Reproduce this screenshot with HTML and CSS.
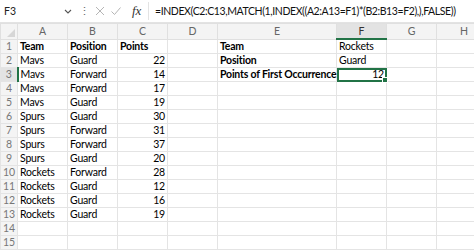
FILE: index.html
```html
<!DOCTYPE html>
<html lang="en">
<head>
  <meta charset="UTF-8" />
  <title>Sheet</title>
  <link rel="stylesheet" href="styles.css">
</head>
<body>
  <div class="formula-bar">
    <div class="name-box">
      <span>F3</span>
      <svg class="chevron" width="8" height="5" viewBox="0 0 8 5"><path d="M1 1 L4 4 L7 1" fill="none" stroke="#555" stroke-width="1.1"/></svg>
    </div>
    <div class="dots">&#8942;</div>
    <svg class="tool cancel" width="12" height="12" viewBox="0 0 12 12"><path d="M2 2 L10 10 M10 2 L2 10" stroke="#b5b5b5" stroke-width="1"/></svg>
    <svg class="tool enter" width="12" height="12" viewBox="0 0 12 12"><path d="M1.5 6.5 L4.5 9.5 L10.5 2.5" fill="none" stroke="#b5b5b5" stroke-width="1"/></svg>
    <span class="fx">fx</span>
    <div class="formula">=INDEX(C2:C13,MATCH(1,INDEX((A2:A13=F1)*(B2:B13=F2),),FALSE))</div>
  </div>

  <table class="sheet">
    <colgroup>
      <col class="c-hdr"><col class="c-std"><col class="c-std"><col class="c-std"><col class="c-std"><col class="c-wide"><col class="c-std"><col class="c-std"><col class="c-last">
    </colgroup>
    <thead>
      <tr><th class="corner"></th><th>A</th><th>B</th><th>C</th><th>D</th><th>E</th><th class="active-col">F</th><th>G</th><th>H</th></tr>
    </thead>
    <tbody>
      <tr><th>1</th><td class="b">Team</td><td class="b">Position</td><td class="b">Points</td><td></td><td class="b">Team</td><td>Rockets</td><td></td><td></td></tr>
      <tr><th>2</th><td>Mavs</td><td>Guard</td><td class="num">22</td><td></td><td class="b">Position</td><td>Guard</td><td></td><td></td></tr>
      <tr><th class="active-row">3</th><td>Mavs</td><td>Forward</td><td class="num">14</td><td></td><td class="b">Points of First Occurrence</td><td class="num selected">12</td><td></td><td></td></tr>
      <tr><th>4</th><td>Mavs</td><td>Forward</td><td class="num">17</td><td></td><td></td><td></td><td></td><td></td></tr>
      <tr><th>5</th><td>Mavs</td><td>Guard</td><td class="num">19</td><td></td><td></td><td></td><td></td><td></td></tr>
      <tr><th>6</th><td>Spurs</td><td>Guard</td><td class="num">30</td><td></td><td></td><td></td><td></td><td></td></tr>
      <tr><th>7</th><td>Spurs</td><td>Forward</td><td class="num">31</td><td></td><td></td><td></td><td></td><td></td></tr>
      <tr><th>8</th><td>Spurs</td><td>Forward</td><td class="num">37</td><td></td><td></td><td></td><td></td><td></td></tr>
      <tr><th>9</th><td>Spurs</td><td>Guard</td><td class="num">20</td><td></td><td></td><td></td><td></td><td></td></tr>
      <tr><th>10</th><td>Rockets</td><td>Forward</td><td class="num">28</td><td></td><td></td><td></td><td></td><td></td></tr>
      <tr><th>11</th><td>Rockets</td><td>Guard</td><td class="num">12</td><td></td><td></td><td></td><td></td><td></td></tr>
      <tr><th>12</th><td>Rockets</td><td>Guard</td><td class="num">16</td><td></td><td></td><td></td><td></td><td></td></tr>
      <tr><th>13</th><td>Rockets</td><td>Guard</td><td class="num">19</td><td></td><td></td><td></td><td></td><td></td></tr>
      <tr><th>14</th><td></td><td></td><td></td><td></td><td></td><td></td><td></td><td></td></tr>
      <tr><th>15</th><td></td><td></td><td></td><td></td><td></td><td></td><td></td><td></td></tr>
    </tbody>
  </table>
</body>
</html>
```

FILE: styles.css
```css
body {
  margin: 0;
  width: 474px;
  height: 250px;
  overflow: hidden;
  background: #fff;
  font-family: "Lato", "Roboto", sans-serif;
  font-size: 10.5px;
  color: #000;
}
.formula-bar {
  display: flex;
  align-items: center;
  height: 22px;
  border-bottom: 1px solid #e3e3e3;
}
.formula-bar > * {
  flex-shrink: 0;
}
.name-box {
  width: 76px;
  display: flex;
  align-items: center;
  justify-content: space-between;
  padding: 0 4px 0 4px;
  box-sizing: border-box;
  color: #222;
}
.chevron {
  margin-top: 1px;
}
.dots {
  width: 16px;
  text-align: center;
  color: #666;
  font-size: 11px;
}
.cancel {
  margin-left: 2px;
}
.enter {
  margin-left: 4px;
}
.fx {
  font-family: "Liberation Serif", serif;
  font-style: italic;
  font-size: 13px;
  color: #333;
  margin-left: 10px;
  width: 16px;
}
.formula-bar .formula {
  flex: 1 1 auto;
  min-width: 0;
  overflow: hidden;
  height: 18px;
  line-height: 18px;
  border-left: 1px solid #e3e3e3;
  padding-left: 6px;
  white-space: nowrap;
  letter-spacing: -0.4px;
  color: #111;
}
.sheet {
  border-collapse: collapse;
  table-layout: fixed;
  width: 490px;
}
.c-hdr { width: 17px; }
.c-std { width: 50px; }
.c-wide { width: 119px; }
.c-last { width: 55px; }
.sheet th, .sheet td {
  height: 13px;
  padding: 0 2px;
  border: 1px solid #e4e4e4;
  white-space: nowrap;
  overflow: visible;
  line-height: 13px;
}
.sheet td {
  letter-spacing: -0.2px;
}
.sheet thead th {
  height: 14px;
  background: #f4f4f4;
  color: #666;
  font-weight: normal;
  text-align: center;
  border-color: #e0e0e0;
}
.sheet thead th.corner {
  position: relative;
}
.sheet thead th.corner::after {
  content: "";
  position: absolute;
  right: 2px;
  bottom: 2px;
  border-left: 8px solid transparent;
  border-bottom: 8px solid #d6d6d6;
}
.sheet thead th.active-col {
  background: #e3e3e3;
  color: #333;
  border-bottom: 2px solid #217346;
}
.sheet tbody th {
  background: #f4f4f4;
  color: #777;
  font-weight: normal;
  text-align: center;
  padding: 0;
}
.sheet tbody th.active-row {
  background: #e3e3e3;
  border-right: 2px solid #217346;
}
.b { font-weight: bold; }
.num { text-align: right; }
.sheet td.selected {
  position: relative;
  outline: 2px solid #217346;
  outline-offset: -2px;
}
.sheet td.selected::after {
  content: "";
  position: absolute;
  right: -2px;
  bottom: -2px;
  width: 4px;
  height: 4px;
  background: #217346;
  border: 1px solid #fff;
}
```
